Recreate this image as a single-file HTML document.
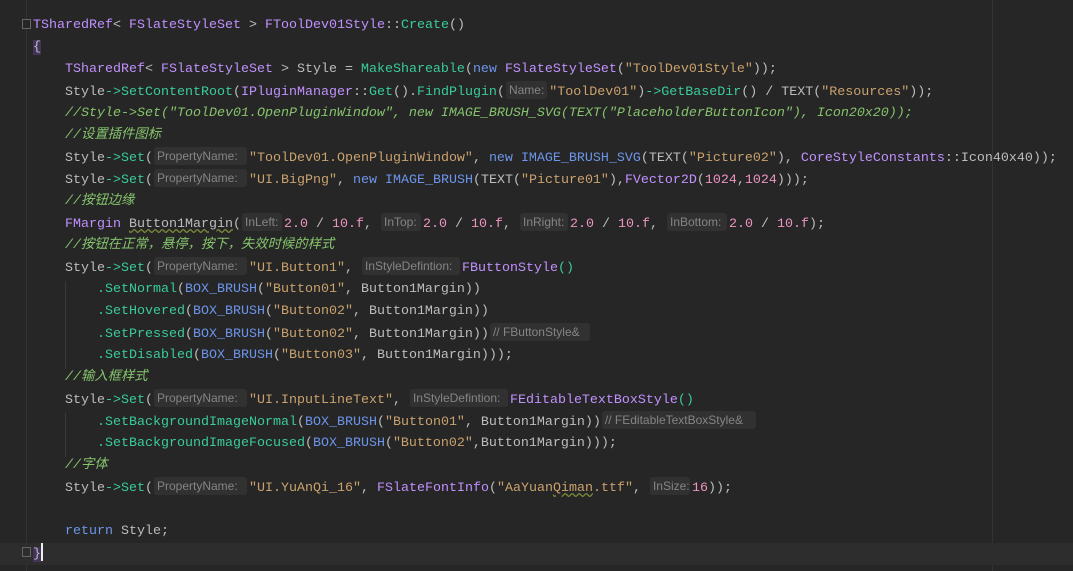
<!DOCTYPE html>
<html><head><meta charset="utf-8"><style>
body{margin:0;width:1073px;height:571px;background:#262626;overflow:hidden;position:relative;font-family:"Liberation Mono","Noto Sans CJK SC",monospace;font-size:13.33px;color:#bdbdbd}
.l{position:absolute;left:33px;height:22px;line-height:22px;white-space:pre}
.t{color:#c191ff}.f{color:#39cc9b}.s{color:#c9a26d}.c{color:#85c46c;font-style:italic}.k{color:#6c95eb}.n{color:#ed94c0}
.h{display:inline-block;box-sizing:border-box;height:18px;line-height:18px;vertical-align:1px;background:#313131;color:#858585;font-family:"Liberation Sans",sans-serif;font-size:12px;border-radius:3px;padding:0 3px;margin:0 2px 0 1px;font-style:normal}
.w{text-decoration:underline wavy #7a8a3a}
.g{position:absolute;width:1px;background:#3a3a3a}
</style></head><body>
<div class="g" style="left:26px;top:0;height:571px;background:#333"></div>
<div class="g" style="left:992px;top:0;height:571px;background:#333"></div>
<div style="position:absolute;left:0;top:543px;width:1073px;height:22px;background:#2d2d2d"></div>
<div class="g" style="left:65px;top:281px;height:88px"></div>
<div class="g" style="left:65px;top:413px;height:44px"></div>
<div style="position:absolute;left:22px;top:19px;width:7px;height:8px;border:1px solid #666;background:#262626"></div>
<div style="position:absolute;left:22px;top:547px;width:7px;height:8px;border:1px solid #666;background:#2d2d2d"></div>
<div class="l" style="top:15px"><span class="t">TSharedRef</span>&lt; <span class="t">FSlateStyleSet</span> &gt; <span class="t">FToolDev01Style</span>::<span class="f">Create</span>()</div>
<div class="l" style="top:37px"><span style="background:#43325a">{</span></div>
<div class="l" style="top:59px">    <span class="t">TSharedRef</span>&lt; <span class="t">FSlateStyleSet</span> &gt; Style = <span class="f">MakeShareable</span>(<span class="k">new</span> <span class="t">FSlateStyleSet</span>(<span class="s">"ToolDev01Style"</span>));</div>
<div class="l" style="top:81px">    Style<span class="f">-&gt;SetContentRoot</span>(<span class="t">IPluginManager</span>::<span class="f">Get</span>().<span class="f">FindPlugin</span>(<span class="h">Name:</span><span class="s">"ToolDev01"</span>)<span class="f">-&gt;GetBaseDir</span>() / TEXT(<span class="s">"Resources"</span>));</div>
<div class="l c" style="top:103px">    //Style-&gt;Set("ToolDev01.OpenPluginWindow", new IMAGE_BRUSH_SVG(TEXT("PlaceholderButtonIcon"), Icon20x20));</div>
<div class="l c" style="top:125px">    //设置插件图标</div>
<div class="l" style="top:147px">    Style<span class="f">-&gt;Set</span>(<span class="h" style="width:93px">PropertyName:</span><span class="s">"ToolDev01.OpenPluginWindow"</span>, <span class="k">new</span> <span class="k">IMAGE_BRUSH_SVG</span>(TEXT(<span class="s">"Picture02"</span>), <span class="t">CoreStyleConstants</span>::Icon40x40));</div>
<div class="l" style="top:169px">    Style<span class="f">-&gt;Set</span>(<span class="h" style="width:93px">PropertyName:</span><span class="s">"UI.BigPng"</span>, <span class="k">new</span> <span class="k">IMAGE_BRUSH</span>(TEXT(<span class="s">"Picture01"</span>),<span class="t">FVector2D</span>(<span class="n">1024</span>,<span class="n">1024</span>)));</div>
<div class="l c" style="top:191px">    //按钮边缘</div>
<div class="l" style="top:213px">    <span class="t">FMargin</span> <span class="w">Button1Margin</span>(<span class="h" style="width:40px">InLeft:</span><span class="n">2.0</span> / <span class="n">10.f</span>, <span class="h" style="width:40px">InTop:</span><span class="n">2.0</span> / <span class="n">10.f</span>, <span class="h" style="width:48px">InRight:</span><span class="n">2.0</span> / <span class="n">10.f</span>, <span class="h" style="width:60px">InBottom:</span><span class="n">2.0</span> / <span class="n">10.f</span>);</div>
<div class="l c" style="top:235px">    //按钮在正常，悬停，按下，失效时候的样式</div>
<div class="l" style="top:257px">    Style<span class="f">-&gt;Set</span>(<span class="h" style="width:93px">PropertyName:</span><span class="s">"UI.Button1"</span>, <span class="h" style="width:98px">InStyleDefintion:</span><span class="t">FButtonStyle</span><span class="f">()</span></div>
<div class="l" style="top:279px">        <span class="f">.SetNormal</span>(<span class="k">BOX_BRUSH</span>(<span class="s">"Button01"</span>, Button1Margin))</div>
<div class="l" style="top:301px">        <span class="f">.SetHovered</span>(<span class="k">BOX_BRUSH</span>(<span class="s">"Button02"</span>, Button1Margin))</div>
<div class="l" style="top:323px">        <span class="f">.SetPressed</span>(<span class="k">BOX_BRUSH</span>(<span class="s">"Button02"</span>, Button1Margin))<span class="h" style="width:100px">// FButtonStyle&amp;</span></div>
<div class="l" style="top:345px">        <span class="f">.SetDisabled</span>(<span class="k">BOX_BRUSH</span>(<span class="s">"Button03"</span>, Button1Margin)));</div>
<div class="l c" style="top:367px">    //输入框样式</div>
<div class="l" style="top:389px">    Style<span class="f">-&gt;Set</span>(<span class="h" style="width:93px">PropertyName:</span><span class="s">"UI.InputLineText"</span>, <span class="h" style="width:98px">InStyleDefintion:</span><span class="t">FEditableTextBoxStyle</span><span class="f">()</span></div>
<div class="l" style="top:411px">        <span class="f">.SetBackgroundImageNormal</span>(<span class="k">BOX_BRUSH</span>(<span class="s">"Button01"</span>, Button1Margin))<span class="h" style="width:154px">// FEditableTextBoxStyle&amp;</span></div>
<div class="l" style="top:433px">        <span class="f">.SetBackgroundImageFocused</span>(<span class="k">BOX_BRUSH</span>(<span class="s">"Button02"</span>,Button1Margin)));</div>
<div class="l c" style="top:455px">    //字体</div>
<div class="l" style="top:477px">    Style<span class="f">-&gt;Set</span>(<span class="h" style="width:93px">PropertyName:</span><span class="s">"UI.YuAnQi_16"</span>, <span class="t">FSlateFontInfo</span>(<span class="s">"AaYuan<span class="w">Qiman</span>.ttf"</span>, <span class="h" style="width:40px">InSize:</span><span class="n">16</span>));</div>
<div class="l" style="top:521px">    <span class="k">return</span> Style;</div>
<div class="l" style="top:543px"><span style="background:#43325a">}</span><span style="display:inline-block;width:2px;height:18px;background:#eee;vertical-align:-4px"></span></div>
</body></html>
